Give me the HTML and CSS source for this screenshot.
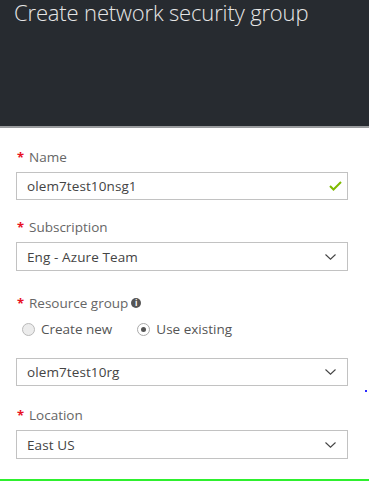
FILE: index.html
```html
<!DOCTYPE html>
<html>
<head>
<meta charset="utf-8">
<link rel="stylesheet" href="styles.css">
</head>
<body>
<div class="page">
  <header class="blade-header">
    <h1 class="blade-title">Create network security group</h1>
  </header>
  <main class="form">
    <div class="field">
      <label class="label"><span class="req">*</span>Name</label>
      <div class="box">
        <span class="value">olem7test10nsg1</span>
        <svg class="check" width="13" height="10" viewBox="0 0 13 10"><path d="M1 5 L4.5 8.5 L12 1" fill="none" stroke="#7fba00" stroke-width="2"/></svg>
      </div>
    </div>
    <div class="field field-sub">
      <label class="label"><span class="req">*</span>Subscription</label>
      <div class="box box-tall">
        <span class="value">Eng - Azure Team</span>
        <svg class="chev" width="11" height="6" viewBox="0 0 11 6"><path d="M0.5 0.5 L5.5 5.2 L10.5 0.5" fill="none" stroke="#444" stroke-width="1.1"/></svg>
      </div>
    </div>
    <div class="field field-rg">
      <label class="label"><span class="req">*</span>Resource group<span class="info">i</span></label>
      <div class="radios">
        <span class="radio"><span class="dot"></span>Create new</span>
        <span class="radio"><span class="dot on"></span>Use existing</span>
      </div>
      <div class="box">
        <span class="value">olem7test10rg</span>
        <svg class="chev" width="11" height="6" viewBox="0 0 11 6"><path d="M0.5 0.5 L5.5 5.2 L10.5 0.5" fill="none" stroke="#444" stroke-width="1.1"/></svg>
      </div>
      <span class="blip"></span>
    </div>
    <div class="field">
      <label class="label"><span class="req">*</span>Location</label>
      <div class="box box-tall">
        <span class="value">East US</span>
        <svg class="chev" width="11" height="6" viewBox="0 0 11 6"><path d="M0.5 0.5 L5.5 5.2 L10.5 0.5" fill="none" stroke="#444" stroke-width="1.1"/></svg>
      </div>
    </div>
  </main>
  <footer class="footer"></footer>
</div>
</body>
</html>
```
FILE: styles.css
```css
* { box-sizing: border-box; }
html, body { margin: 0; padding: 0; background: #fff; }
body { font-family: "Open Sans", "Noto Sans", sans-serif; }
.page {
  width: 369px;
  height: 481px;
  display: flex;
  flex-direction: column;
  overflow: hidden;
}
.blade-header {
  height: 128px;
  background: #272b30;
  border-bottom: 2px solid #9a9c9e;
  padding: 0 0 0 14px;
  flex: none;
}
.blade-title {
  margin: 0;
  font-weight: 300;
  font-size: 22px;
  line-height: 25px;
  color: #e6e6e6;
  letter-spacing: -0.15px;
}
.form {
  flex: 1;
  padding: 21px 21px 0 16px;
  position: relative;
}
.field { margin-bottom: 19px; position: relative; }
.field-sub { margin-bottom: 24px; }
.field-rg { margin-bottom: 21px; }
.label {
  display: flex;
  align-items: center;
  font-size: 13.5px;
  line-height: 16px;
  height: 16px;
  color: #666;
  margin-bottom: 7px;
}
.req {
  color: #e81123;
  font-weight: 700;
  font-size: 13px;
  width: 13px;
  padding-left: 1px;
}
.info {
  display: inline-flex;
  align-items: center;
  justify-content: center;
  width: 10px;
  height: 10px;
  border-radius: 50%;
  background: #555;
  color: #fff;
  font-size: 8px;
  font-weight: 700;
  margin-left: 3px;
  line-height: 1;
}
.box {
  height: 28px;
  border: 1px solid #c2c2c2;
  display: flex;
  align-items: center;
  justify-content: space-between;
  padding: 0 11px 0 10px;
  font-size: 13.5px;
  color: #444;
  letter-spacing: 0.1px;
}
.box-tall { height: 29px; }
.check { margin-right: -6px; }
.radios {
  display: flex;
  align-items: center;
  height: 16px;
  margin-top: 10px;
  margin-bottom: 21px;
  padding-left: 6px;
  font-size: 13.5px;
  color: #555;
}
.radio { display: flex; align-items: center; margin-right: 25px; }
.dot {
  width: 13px;
  height: 13px;
  border-radius: 50%;
  border: 1px solid #b9b9b9;
  background: #ececec;
  margin-right: 6px;
  position: relative;
}
.dot.on { background: #fff; border-color: #aaa; }
.dot.on::after {
  content: "";
  position: absolute;
  left: 3px;
  top: 3px;
  width: 5px;
  height: 5px;
  border-radius: 50%;
  background: #555;
}
.blip {
  position: absolute;
  right: -19px;
  top: 95px;
  width: 2px;
  height: 2px;
  background: #2b2bff;
}
.footer {
  flex: none;
  height: 2px;
  background: #2ef02e;
}
```
